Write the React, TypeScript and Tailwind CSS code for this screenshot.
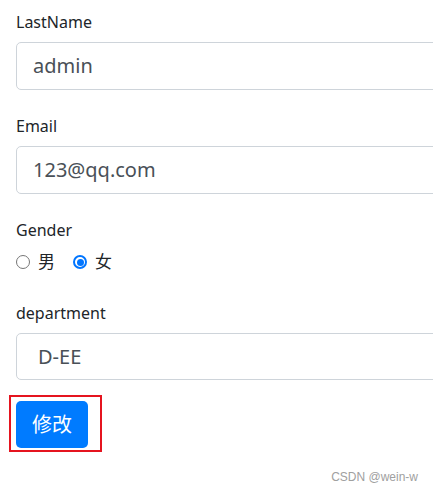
const font = { fontFamily: '"Noto Sans", "Noto Sans CJK SC", sans-serif' };

const Field = ({ label, value, select }: { label: string; value: string; select?: boolean }) => (
  <div className="mb-[24px]">
    <label className="block text-[16px] leading-[24px] mb-[8px] text-[#212529]">{label}</label>
    <div
      className={`h-[48px] w-[440px] rounded-[5px] border border-[#ced4da] bg-white flex items-center text-[20px] text-[#495057] ${
        select ? "pl-[21px]" : "pl-[16px]"
      }`}
    >
      {value}
    </div>
  </div>
);

const Radio = ({ checked, label }: { checked?: boolean; label: string }) => (
  <span className="inline-flex items-center mr-[18px]">
    <span
      className={`w-[14px] h-[14px] rounded-full flex items-center justify-center ${
        checked ? "border-2 border-[#0075ff]" : "border border-[#767676]"
      }`}
    >
      {checked && <span className="w-[7px] h-[7px] rounded-full bg-[#0075ff]" />}
    </span>
    <span className="ml-[8px] text-[17px] text-[#212529]">{label}</span>
  </span>
);

export default function App() {
  return (
    <div className="w-[433px] h-[489px] overflow-hidden bg-white relative" style={font}>
      <div className="pl-[16px] pt-[10px]">
        <Field label="LastName" value="admin" />
        <Field label="Email" value="123@qq.com" />
        <div className="mb-[27px]">
          <label className="block text-[16px] leading-[24px] mb-[8px] text-[#212529]">Gender</label>
          <div className="flex items-center h-[24px] mt-[1px]">
            <Radio label="男" />
            <Radio checked label="女" />
          </div>
        </div>
        <div className="mb-[15px]">
          <label className="block text-[16px] leading-[24px] mb-[8px] text-[#212529]">department</label>
          <div className="h-[47px] w-[440px] rounded-[5px] border border-[#ced4da] bg-white flex items-center text-[20px] text-[#495057] pl-[21px]">
            D-EE
          </div>
        </div>
        <div className="inline-block -ml-[7px] border-2 border-[#e5141f] pl-[5px] pr-[12px] pt-[4px] pb-[2px]">
          <button className="w-[72px] h-[47px] rounded-[5px] bg-[#007bff] text-white text-[20px] leading-none">
            修改
          </button>
        </div>
      </div>
      <div
        className="absolute right-[15px] top-[468px] text-[12px] text-[#a0a0a0]"
        style={{ fontFamily: '"Liberation Sans", Arial, sans-serif' }}
      >
        CSDN @wein-w
      </div>
    </div>
  );
}
